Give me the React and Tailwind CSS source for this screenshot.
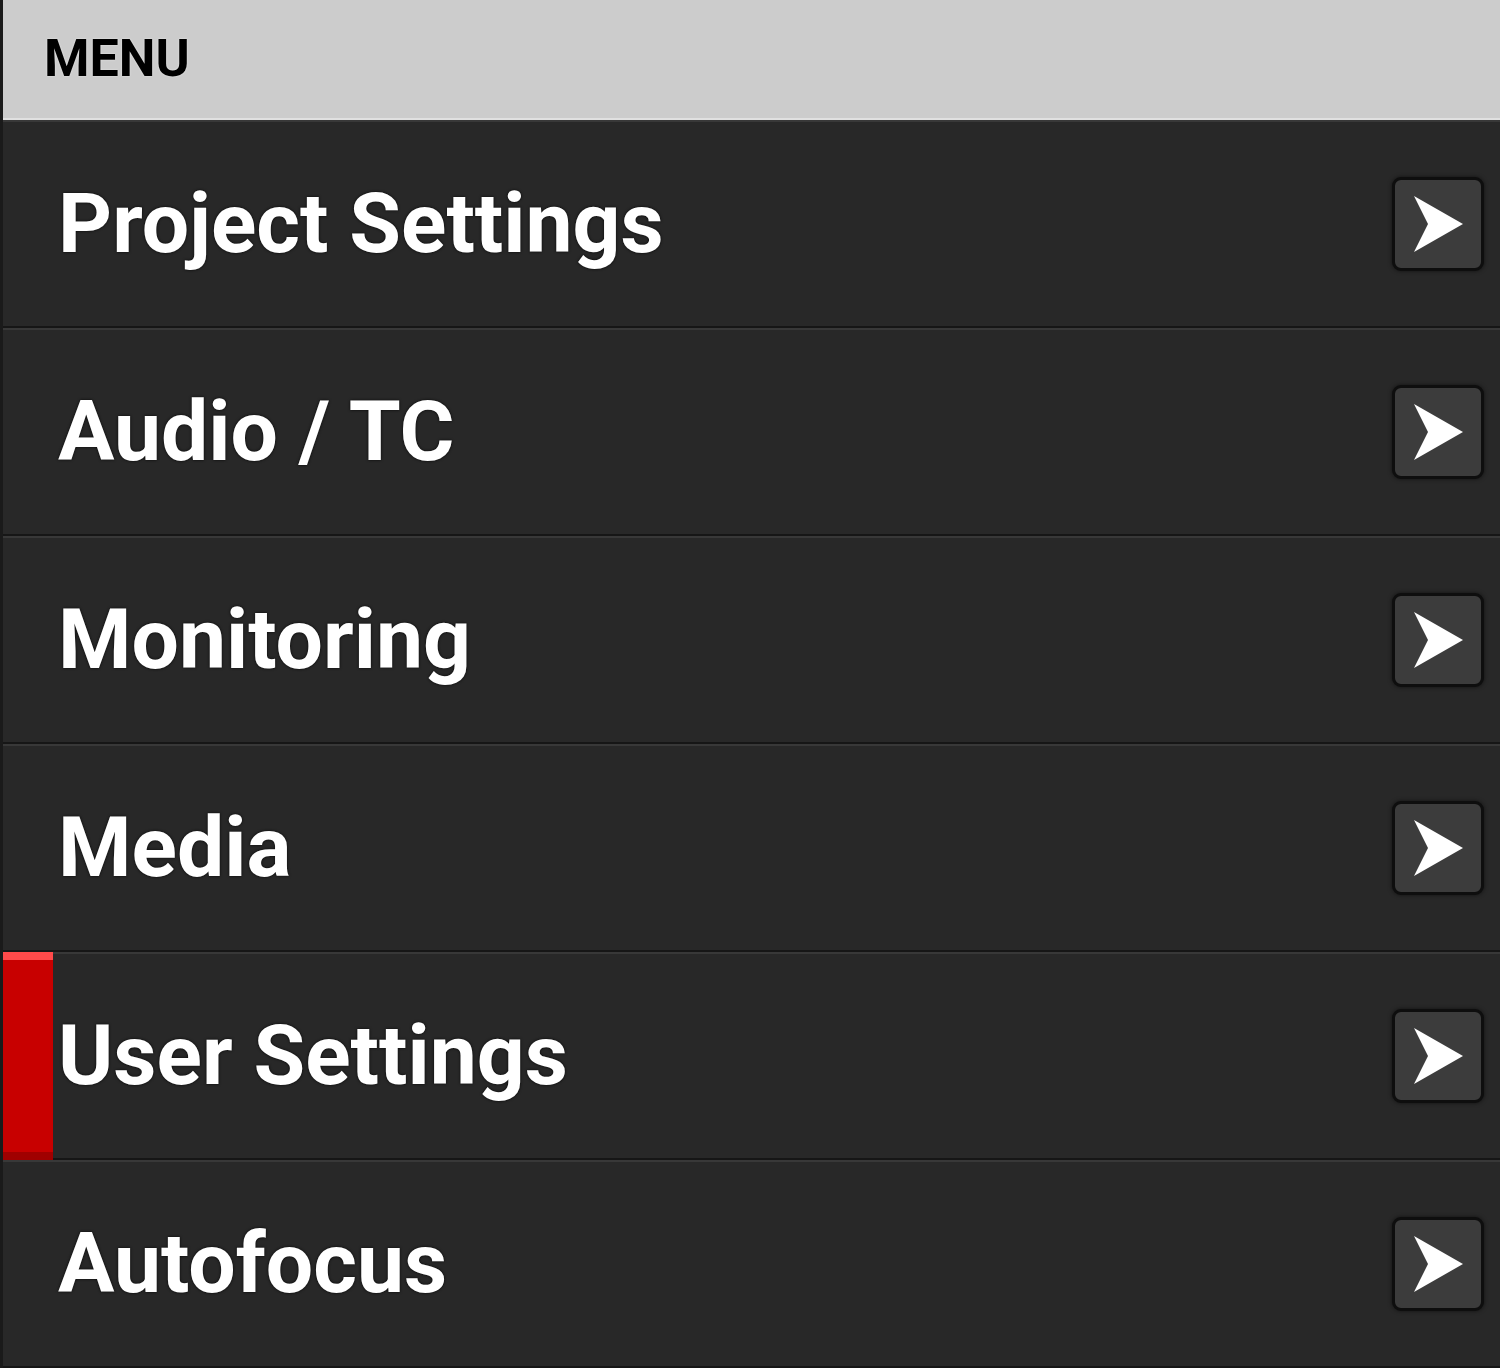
import React from 'react';

const items = ['Project Settings', 'Audio / TC', 'Monitoring', 'Media', 'User Settings', 'Autofocus'];

const ArrowButton = () => (
    <div className="w-[92px] h-[94px] rounded-[9px] border-[3px] border-[#0e0e0e] bg-[#3c3c3c] shadow-[0_0_4px_rgba(0,0,0,0.6)] flex items-center justify-center">
        <svg width="86" height="88" viewBox="0 0 86 88">
            <path d="M19 16 L68 44 L19 72 L33 44 Z" fill="#ffffff" />
        </svg>
    </div>
);

const MenuRow = ({ label, active }) => (
    <div className="relative h-[208px] flex items-center justify-between bg-[#282828] border-t-2 border-[#383838] border-b-2 border-b-[#161616] pr-[16px]">
        {active && (
            <div className="absolute left-0 top-[-2px] bottom-[-2px] w-[50px] bg-[#c80000] border-t-[8px] border-t-[#ff4a4a] border-b-[8px] border-b-[#a00000]" />
        )}
        <span className="relative pl-[55px] text-[84px] font-bold text-white leading-none [text-shadow:0_0_3px_rgba(0,0,0,0.9)]">
            {label}
        </span>
        <ArrowButton />
    </div>
);

export default function App() {
    return (
        <div className="w-[1500px] h-[1368px] bg-[#282828] border-l-[3px] border-[#1a1a1a] overflow-hidden" style={{ fontFamily: 'Roboto, "Liberation Sans", sans-serif' }}>
            <div className="h-[120px] bg-[#cccccc] border-b-2 border-[#e0e0e0] flex items-center pl-[41px]">
                <span className="text-[52px] font-bold text-black leading-none [text-shadow:0_0_2px_rgba(255,255,255,0.7)]">MENU</span>
            </div>
            {items.map(item => (
                <MenuRow key={item} label={item} active={item === 'User Settings'} />
            ))}
        </div>
    );
}
